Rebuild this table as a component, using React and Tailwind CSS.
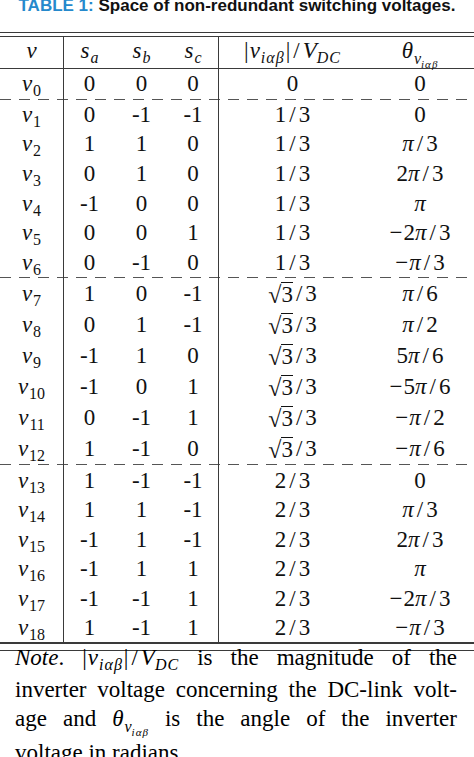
import React from "react";

const COLS = "grid grid-cols-[63px_52px_53px_50px_148px_108px]";
const LINE = "border-[#3a3a3a]";

const Sub = ({ children }) => (
  <span className="not-italic text-[16px] relative top-[5px] ml-[1px]">{children}</span>
);

const I = ({ children }) => <span className="italic">{children}</span>;

const V = ({ n }) => (
  <span>
    <I>v</I>
    <Sub>{n}</Sub>
  </span>
);

const Slash = () => <span className="mx-[3px]">/</span>;

const Frac = ({ a, b }) => (
  <span>
    {a}
    <Slash />
    {b}
  </span>
);

const Sqrt3 = () => (
  <span className="inline-flex items-start">
    <span className="text-[24px] leading-none relative top-[1px]">√</span>
    <span className="border-t-[1.3px] border-[#111] leading-[23px]">3</span>
    <span className="mx-[3px] leading-[23px]">/</span>
    <span className="leading-[23px]">3</span>
  </span>
);

const Ang = ({ s }) => {
  if (s === "0") return <span>0</span>;
  const neg = s.startsWith("-");
  const body = neg ? s.slice(1) : s;
  const [num, den] = body.split("/");
  const coef = num.replace("π", "");
  return (
    <span>
      {neg && <span className="mr-[1px]">−</span>}
      {coef}
      <I>π</I>
      {den && (
        <>
          <Slash />
          {den}
        </>
      )}
    </span>
  );
};

const VIab = () => (
  <span>
    <I>v</I>
    <span className="text-[16px] relative top-[5px] ml-[1px] tracking-[1px]">
      <I>iαβ</I>
    </span>
  </span>
);

const Theta = () => (
  <span>
    <I>θ</I>
    <span className="text-[16px] relative top-[6px] ml-[1px]">
      <I>v</I>
      <span className="text-[11px] relative top-[4px] tracking-[1px]">
        <I>iαβ</I>
      </span>
    </span>
  </span>
);

const Mag = () => (
  <span>
    <span className="mr-[1px]">|</span>
    <VIab />
    <span className="ml-[1px]">|</span>
    <Slash />
    <I>V</I>
    <span className="text-[16px] relative top-[5px] tracking-[1px]">
      <I>DC</I>
    </span>
  </span>
);

const rows = [
  ["1", "0", "-1", "-1", "f13", "0"],
  ["2", "1", "1", "0", "f13", "π/3"],
  ["3", "0", "1", "0", "f13", "2π/3"],
  ["4", "-1", "0", "0", "f13", "π"],
  ["5", "0", "0", "1", "f13", "-2π/3"],
  ["6", "0", "-1", "0", "f13", "-π/3"],
  ["7", "1", "0", "-1", "r3", "π/6"],
  ["8", "0", "1", "-1", "r3", "π/2"],
  ["9", "-1", "1", "0", "r3", "5π/6"],
  ["10", "-1", "0", "1", "r3", "-5π/6"],
  ["11", "0", "-1", "1", "r3", "-π/2"],
  ["12", "1", "-1", "0", "r3", "-π/6"],
  ["13", "1", "-1", "-1", "f23", "0"],
  ["14", "1", "1", "-1", "f23", "π/3"],
  ["15", "-1", "1", "-1", "f23", "2π/3"],
  ["16", "-1", "1", "1", "f23", "π"],
  ["17", "-1", "-1", "1", "f23", "-2π/3"],
  ["18", "1", "-1", "1", "f23", "-π/3"],
];

const Row = ({ h, cells, pad = "" }) => (
  <div className={`${COLS} ${h}`}>
    {cells.map((c, i) => (
      <div
        key={i}
        className={`flex items-center justify-center ${pad} ${
          i === 1 || i === 4 ? `border-l-[1.5px] ${LINE}` : ""
        }`}
      >
        {c}
      </div>
    ))}
  </div>
);

const Dash = () => (
  <div
    className={`${COLS} h-px bg-[repeating-linear-gradient(to_right,#555_0_11px,transparent_11px_19px)]`}
  >
    {[0, 1, 2, 3, 4, 5].map((i) => (
      <div key={i} className={i === 1 || i === 4 ? `border-l-[1.5px] ${LINE}` : ""} />
    ))}
  </div>
);

const magOf = (m) =>
  m === "f13" ? <Frac a="1" b="3" /> : m === "f23" ? <Frac a="2" b="3" /> : <Sqrt3 />;

const dataRow = (r, h) => (
  <Row
    key={r[0]}
    h={h}
    cells={[<V n={r[0]} />, r[1], r[2], r[3], magOf(r[4]), <Ang s={r[5]} />]}
  />
);

export default function App() {
  return (
    <div className="w-[474px] h-[757px] overflow-hidden bg-white flex flex-col text-[#111]">
      <div className="h-[32px] shrink-0 text-center font-['Liberation_Sans',Arial,sans-serif] font-bold text-[17px] leading-[12px]">
        <span className="text-[#2589cc]">TABLE 1:</span> Space of non-redundant switching voltages.
      </div>
      <div className="h-px shrink-0 bg-[#3a3a3a]" />
      <div className="h-[3px] shrink-0" />
      <div className="h-px shrink-0 bg-[#3a3a3a]" />

      <div className="font-['Liberation_Serif','Times_New_Roman',serif] text-[23px] leading-none shrink-0">
        <div className={`border-b-[1.5px] ${LINE}`}>
          <Row
            h="h-[31px]"
            pad="pb-[4px]"
            cells={[
              <I>v</I>,
              <span>
                <I>s</I>
                <Sub>
                  <I>a</I>
                </Sub>
              </span>,
              <span>
                <I>s</I>
                <Sub>
                  <I>b</I>
                </Sub>
              </span>,
              <span>
                <I>s</I>
                <Sub>
                  <I>c</I>
                </Sub>
              </span>,
              <Mag />,
              <Theta />,
            ]}
          />
        </div>
        <Row h="h-[29.5px]" cells={[<V n="0" />, "0", "0", "0", "0", "0"]} />
        <Dash />
        {rows.slice(0, 6).map((r) => dataRow(r, "h-[29.67px]"))}
        <Dash />
        {rows.slice(6, 12).map((r) => dataRow(r, "h-[31px]"))}
        <Dash />
        {rows.slice(12, 18).map((r) => dataRow(r, "h-[29.5px]"))}
      </div>
      <div className="h-[1.5px] shrink-0 bg-[#3a3a3a]" />
      <div className="h-[6.5px] shrink-0" />
      <div className="h-px shrink-0 bg-[#3a3a3a]" />

      <div className="-mt-[8px] pl-[15px] pr-[17px] font-['Liberation_Serif','Times_New_Roman',serif] text-[23px] leading-[29.5px] text-black">
        <div className="text-justify [text-align-last:justify]">
          <I>Note</I>. <Mag /> is the magnitude of the
        </div>
        <div className="text-justify [text-align-last:justify]">
          inverter voltage concerning the DC-link volt-
        </div>
        <div className="text-justify [text-align-last:justify]">
          age and <Theta /> is the angle of the inverter
        </div>
        <div>voltage in radians.</div>
      </div>
    </div>
  );
}
